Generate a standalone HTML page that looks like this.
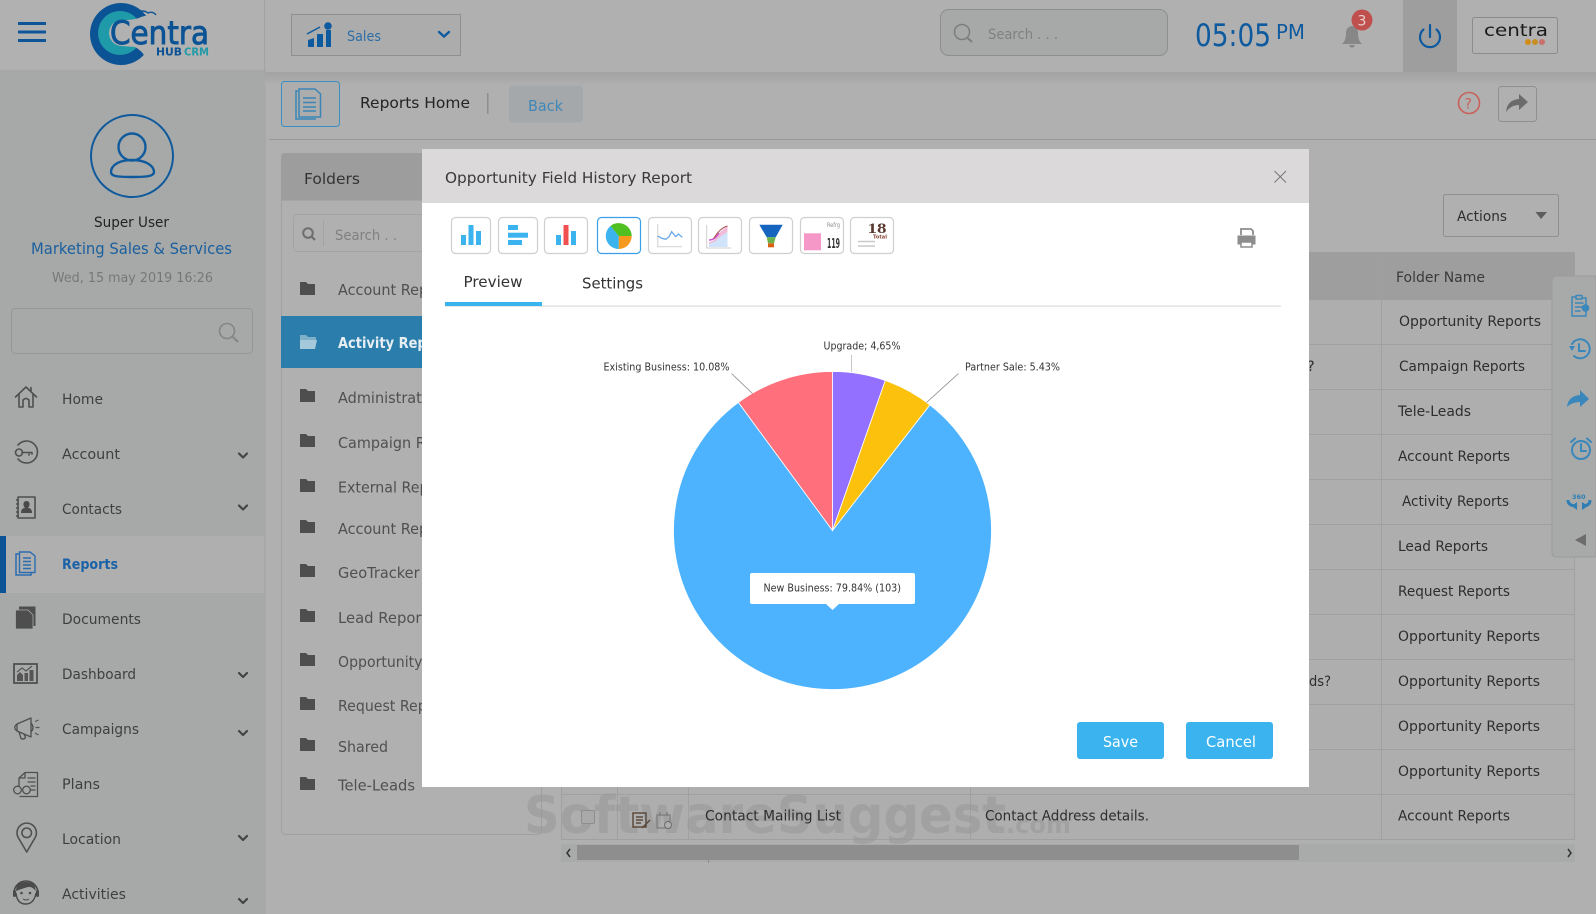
<!DOCTYPE html>
<html lang="en">
<head>
<meta charset="utf-8">
<title>Centra Hub CRM - Reports</title>
<style>
html,body{margin:0;padding:0;background:#b0b0b0;width:1596px;height:914px;overflow:hidden}
svg{display:block;position:absolute;left:0;top:0}
text{font-family:"DejaVu Sans","Liberation Sans",sans-serif;fill:#2e2e2e;font-size:14.5px}
.m{fill:#3f3f3f;font-size:14px}
.f{fill:#505050;font-size:15px}
.t{fill:#2e2e2e;font-size:14.5px}
.l{font-size:10.5px;fill:#333}
.ic{fill:none;stroke:#4f4f4f;stroke-width:1.6;stroke-linejoin:round;stroke-linecap:round}
.chev{fill:none;stroke:#444;stroke-width:2.2;stroke-linecap:round;stroke-linejoin:round}
.cb{fill:#fff;stroke:#cfcfcf;stroke-width:1.2}
.fo{fill:#4e4e4e}
.rl{stroke:#a0a0a0;stroke-width:1}
.ri{fill:none;stroke:#3a88bb;stroke-width:2;stroke-linecap:round;stroke-linejoin:round}
</style>
</head>
<body>
<svg width="1596" height="914" viewBox="0 0 1596 914" xmlns="http://www.w3.org/2000/svg">
<defs>
<linearGradient id="sh" x1="0" y1="0" x2="0" y2="1"><stop offset="0" stop-color="#a3a3a3"/><stop offset="1" stop-color="#b0b0b0"/></linearGradient>
</defs>
<rect width="1596" height="914" fill="#b0b0b0"/>

<!-- sidebar -->
<rect x="0" y="70" width="266" height="844" fill="#a7a9a8"/>
<rect x="0" y="0" width="264" height="70" fill="#b1b1b1"/>
<rect x="264" y="0" width="1" height="72" fill="#a2a2a2"/>
<g fill="#0d5596"><rect x="18" y="22" width="28" height="3"/><rect x="18" y="30.5" width="28" height="3"/><rect x="18" y="39" width="28" height="3"/></g>

<!-- logo -->
<circle cx="121" cy="34" r="31" fill="#0b5394"/>
<circle cx="120" cy="33" r="22" fill="#1f9aa8"/>
<circle cx="122" cy="33" r="13" fill="#b1b1b1"/>
<path d="M124 20 Q136 20 141 17 Q146 15 152 16 L214 15 L214 60 L146 60 Q144 52 135 47 L122 46 Z" fill="#b1b1b1"/>
<path d="M136 13 Q143 9 148 13 Q153 11 156 15" fill="none" stroke="#0b5394" stroke-width="1.4"/>
<text x="110" y="44" style="font-size:32px;fill:#0b5394;stroke:#0b5394;stroke-width:.9" textLength="99" lengthAdjust="spacingAndGlyphs">Centra</text>
<text x="156" y="55.500" style="font-size:10.5px;font-weight:bold;fill:#0b5394" textLength="26" lengthAdjust="spacingAndGlyphs">HUB</text>
<text x="184" y="55.500" style="font-size:10.5px;font-weight:bold;fill:#1f9aa8" textLength="25" lengthAdjust="spacingAndGlyphs">CRM</text>

<!-- user -->
<circle cx="132" cy="156" r="41" fill="none" stroke="#0f5a9d" stroke-width="2"/>
<circle cx="132" cy="147" r="13.5" fill="none" stroke="#0f5a9d" stroke-width="2.4"/>
<path d="M132 160 C118 160 111 166 111 172 C111 176 116 177 132 177 C148 177 154 176 154 172 C154 166 146 160 132 160 Z" fill="none" stroke="#0f5a9d" stroke-width="2.4"/>
<text x="94" y="227" style="font-size:14px;fill:#222" textLength="75" lengthAdjust="spacingAndGlyphs">Super User</text>
<text x="31" y="254" style="font-size:16px;fill:#1a5f9e" textLength="201" lengthAdjust="spacingAndGlyphs">Marketing Sales &amp; Services</text>
<text x="52" y="282" style="font-size:13.5px;fill:#777" textLength="161" lengthAdjust="spacingAndGlyphs">Wed, 15 may 2019 16:26</text>
<rect x="11.5" y="308.5" width="241" height="45" rx="4" fill="#a7a9a8" stroke="#959595"/>
<circle cx="227" cy="331" r="7.5" fill="none" stroke="#858585" stroke-width="1.6"/><path d="M232.500 336.500 L238 342" stroke="#858585" stroke-width="2"/>

<!-- menu -->
<rect x="0" y="536" width="264" height="57" fill="#afafaf"/>
<rect x="0" y="536" width="6" height="57" fill="#0b5394"/>
<text class="m" x="62" y="404" textLength="41" lengthAdjust="spacingAndGlyphs">Home</text>
<text class="m" x="62" y="459" textLength="58" lengthAdjust="spacingAndGlyphs">Account</text>
<text class="m" x="62" y="514" textLength="60" lengthAdjust="spacingAndGlyphs">Contacts</text>
<text x="62" y="569" style="font-size:14px;font-weight:bold;fill:#1a62a8" textLength="56" lengthAdjust="spacingAndGlyphs">Reports</text>
<text class="m" x="62" y="624" textLength="79" lengthAdjust="spacingAndGlyphs">Documents</text>
<text class="m" x="62" y="679" textLength="74" lengthAdjust="spacingAndGlyphs">Dashboard</text>
<text class="m" x="62" y="734" textLength="77" lengthAdjust="spacingAndGlyphs">Campaigns</text>
<text class="m" x="62" y="789" textLength="38" lengthAdjust="spacingAndGlyphs">Plans</text>
<text class="m" x="62" y="844" textLength="59" lengthAdjust="spacingAndGlyphs">Location</text>
<text class="m" x="62" y="899" textLength="64" lengthAdjust="spacingAndGlyphs">Activities</text>
<path class="chev" d="M239 453.500 L243 457.500 L247 453.500"/>
<path class="chev" d="M239 505.500 L243 509.500 L247 505.500"/>
<path class="chev" d="M239 673 L243 677 L247 673"/>
<path class="chev" d="M239 731 L243 735 L247 731"/>
<path class="chev" d="M239 836 L243 840 L247 836"/>
<path class="chev" d="M239 899 L243 903 L247 899"/>
<!-- menu icons -->
<path class="ic" d="M15.500 397 L26 387 L36.500 397 M19 394 V407 H23 V400 Q26 397 29 400 V407 H33 V394 M31 391 V387.500"/>
<path class="ic" d="M18 445 A11 11 0 1 1 18 459 M22 452.500 H32 V454 M29 454 V455"/>
<circle cx="19" cy="452.500" r="3.500" class="ic"/>
<rect x="18" y="497" width="17" height="21" class="ic"/>
<path d="M16 500 h3 M16 504 h3 M16 508 h3 M16 512 h3 M16 516 h3" stroke="#4f4f4f" stroke-width="1.4"/>
<path d="M21 513 Q21 508 25 508 Q23 506 23.500 503.500 Q24 501 26.500 501 Q29 501 29.500 503.500 Q30 506 28 508 Q32 508 32 513 Z" fill="#4a4a4a"/>
<path d="M19.300 554 H16 V575 H31 V572.800" fill="none" stroke="#2a6db0" stroke-width="1.5"/>
<path d="M19.500 552 H30 L35 556 V572.500 H19.500 Z M23 558 H31 M23 561.500 H31 M23 565 H31 M23 568.500 H31" fill="none" stroke="#2a6db0" stroke-width="1.4"/>
<path d="M19 606.500 H35.500 V626 H19 Z" fill="#4e4e4e"/>
<path d="M15.500 610 H28 L33 615 V629 H15.500 Z" fill="#4e4e4e" stroke="#a7a9a8" stroke-width=".8"/>
<rect x="14" y="664" width="23" height="19" fill="none" stroke="#505050" stroke-width="1.8"/>
<path d="M17 681 V675 L20 672 L23 675 V681 Z M24.500 681 V673 H28 V681 Z M29.500 681 V670 H33.500 V681 Z" fill="#555"/>
<path d="M17 672 L22 668 L26 671 L32 666" fill="none" stroke="#555" stroke-width="1.2"/>
<path class="ic" d="M17 724 L31 718 V737 L17 731 Z M17 724 Q12.500 727.500 17 731 M19 732 L21 738.500 Q24 740 25.500 737.500 L24 734 M31 723 Q35 727.500 31 732" style="stroke-width:1.3"/>
<path d="M35 721.500 L38.500 720 M35.500 727.500 H39.500 M35 733 L38.500 735" stroke="#555" stroke-width="1.2"/>
<path class="ic" d="M19 786 V778 L25 772.500 H37.500 V796.500 H20 M25 772.500 V778 H19 M28 778 H35 M28 782 H35 M31 786 H35 M31 790 H35" style="stroke-width:1.3"/>
<circle cx="17.500" cy="790" r="3.800" class="ic" style="stroke-width:1.3"/><circle cx="26.500" cy="790" r="3.800" class="ic" style="stroke-width:1.3"/>
<path class="ic" d="M26.700 852 L18.500 838 A9.700 9.700 0 1 1 34.900 838 Z"/>
<circle cx="26.700" cy="832.800" r="4.800" class="ic"/>
<path d="M14 893 A12 12 0 0 1 38 893" fill="none" stroke="#4a4a4a" stroke-width="1.6"/>
<path d="M16 893 Q17 904 25.700 904 Q34 904 36 893" fill="none" stroke="#4a4a4a" stroke-width="1.4"/>
<rect x="13" y="890" width="3" height="7" rx="1.500" fill="#4a4a4a"/><rect x="36" y="890" width="3" height="7" rx="1.500" fill="#4a4a4a"/>
<path d="M16 891 Q16 882 25.700 882 Q36 882 35.500 891 Q32 886 28 887 Q21 889 16 891 Z" fill="#4a4a4a"/>
<circle cx="21.500" cy="893" r="1.300" fill="#4a4a4a"/><circle cx="30" cy="893" r="1.300" fill="#4a4a4a"/>
<path d="M23 899 Q26 901 29 899" fill="none" stroke="#4a4a4a"/>

<!-- header bar -->
<rect x="265" y="72" width="1331" height="14" fill="url(#sh)"/>
<rect x="291.500" y="14.500" width="169" height="41" fill="#acacac" stroke="#8f8f8f"/>
<path d="M308 40 V47 H314 V38 Z M317 34 V47 H323 V34 Z M326 30 V47 H331 V30 Z" fill="#0e5a9e"/>
<path d="M307 34 L320 27" stroke="#0e5a9e" stroke-width="1.5" fill="none"/>
<circle cx="328" cy="26" r="3.800" fill="#0e5a9e"/>
<text x="347" y="41" style="font-size:14px;fill:#2d6ea8" textLength="34" lengthAdjust="spacingAndGlyphs">Sales</text>
<path d="M439 32 L444 36.500 L449 32" fill="none" stroke="#0e5a9e" stroke-width="2.400" stroke-linecap="round"/>

<rect x="940.500" y="9.500" width="227" height="46" rx="8" fill="#a7a9a8" stroke="#8e8e8e"/>
<circle cx="962" cy="32" r="7.500" fill="none" stroke="#7d7d7d" stroke-width="1.500"/><path d="M967.500 38 L972 42" stroke="#7d7d7d" stroke-width="2"/>
<text x="988" y="39" style="font-size:14px;fill:#808080" textLength="70" lengthAdjust="spacingAndGlyphs">Search . . .</text>
<text x="1195" y="46" style="font-size:31px;fill:#0e5a9e" textLength="76" lengthAdjust="spacingAndGlyphs">05:05</text>
<text x="1276" y="39" style="font-size:20px;fill:#0e5a9e" textLength="29" lengthAdjust="spacingAndGlyphs">PM</text>
<path d="M1342 44 Q1346 41 1346 33 Q1346 27 1352 26 Q1358 27 1358 33 Q1358 41 1362 44 Z" fill="#878787"/>
<path d="M1349 45 H1355 L1353.500 47.500 H1350.500 Z" fill="#878787"/>
<circle cx="1362" cy="20" r="10.500" fill="#c0504d"/>
<text x="1357.500" y="25.500" style="font-size:14px;fill:#e6d0d0">3</text>
<rect x="1403" y="0" width="54" height="72" fill="#9e9e9e"/>
<path d="M1423.500 29.500 A10 10 0 1 0 1436.500 29.500 M1430 25 V37" fill="none" stroke="#0e5a9e" stroke-width="2.200" stroke-linecap="round"/>
<rect x="1472.500" y="17.500" width="85" height="36" rx="2" fill="#b2b2b2" stroke="#8c8c8c"/>
<text x="1484" y="36" style="font-size:17px;fill:#1a1a1a" textLength="64" lengthAdjust="spacingAndGlyphs">centra</text>
<circle cx="1528" cy="42" r="3" fill="#d28d19"/><circle cx="1535" cy="42" r="3" fill="#c78e24"/><circle cx="1542" cy="42" r="3" fill="#c7706c"/>

<!-- subheader -->
<rect x="281.500" y="81.500" width="58" height="45" rx="3" fill="#adadad" stroke="#3b8ec0"/>
<path d="M298 91 H296 V119 H316" fill="none" stroke="#3a86b6" stroke-width="1.500"/>
<path d="M299 89 H315 L320.500 94 V117 H299 Z M303 98 H316 M303 102.500 H316 M303 107 H316 M303 111 H316" fill="none" stroke="#3a86b6" stroke-width="1.500"/>
<text x="360" y="108" style="font-size:15px;fill:#242424" textLength="110" lengthAdjust="spacingAndGlyphs">Reports Home</text>
<rect x="487" y="93" width="1.500" height="21" fill="#8e8e8e"/>
<rect x="509" y="85.500" width="74" height="37" rx="4" fill="#a4a8aa"/>
<text x="528" y="111" style="font-size:15px;fill:#3f87b8" textLength="35" lengthAdjust="spacingAndGlyphs">Back</text>
<circle cx="1469" cy="103" r="10.500" fill="none" stroke="#c9605a" stroke-width="1.600"/>
<text x="1464.500" y="108.500" style="font-size:14px;fill:#c9605a">?</text>
<rect x="1498.500" y="86.500" width="38" height="35" rx="3" fill="#b0b0b0" stroke="#8f8f8f"/>
<path d="M1506 112 Q1507 100 1519 99 V94 L1528 102 L1519 110 V105 Q1511 105 1506 112 Z" fill="#6b6b6b"/>
<rect x="269" y="139" width="1327" height="1" fill="#989898"/>

<!-- folders panel -->
<rect x="281.500" y="153.500" width="260" height="681" rx="4" fill="#b0b0b0" stroke="#a0a0a0"/>
<path d="M281 200.500 V157 Q281 153 285 153 H430 V200.500 Z" fill="#9d9d9d"/>
<text x="304" y="184" style="font-size:15.500px;fill:#343434" textLength="56" lengthAdjust="spacingAndGlyphs">Folders</text>
<rect x="293.500" y="214.500" width="140" height="37" rx="4" fill="#b0b0b0" stroke="#a3a3a3"/>
<rect x="323" y="220" width="1" height="26" fill="#a3a3a3"/>
<circle cx="308" cy="233" r="4.800" fill="none" stroke="#6e6e6e" stroke-width="2"/><path d="M311.500 236.500 L315 240" stroke="#6e6e6e" stroke-width="2.200"/>
<text x="335" y="240" style="font-size:14px;fill:#808080" textLength="62" lengthAdjust="spacingAndGlyphs">Search . .</text>

<rect x="281" y="316" width="160" height="52" fill="#2b7eab"/>
<path d="M300 282 H306 L308 284 H315 V295 H300 Z" class="fo"/>
<path d="M300 335 H306 L308 337 H316 V341 L300 341 Z" fill="#7fb0ca"/><path d="M300 340 H317 L315 349 H300 Z" fill="#a6c8db"/>
<path d="M300 389 H306 L308 391 H315 V402 H300 Z" class="fo"/>
<path d="M300 434 H306 L308 436 H315 V447 H300 Z" class="fo"/>
<path d="M300 479 H306 L308 481 H315 V492 H300 Z" class="fo"/>
<path d="M300 520 H306 L308 522 H315 V533 H300 Z" class="fo"/>
<path d="M300 564 H306 L308 566 H315 V577 H300 Z" class="fo"/>
<path d="M300 609 H306 L308 611 H315 V622 H300 Z" class="fo"/>
<path d="M300 653 H306 L308 655 H315 V666 H300 Z" class="fo"/>
<path d="M300 697 H306 L308 699 H315 V710 H300 Z" class="fo"/>
<path d="M300 738 H306 L308 740 H315 V751 H300 Z" class="fo"/>
<path d="M300 777 H306 L308 779 H315 V790 H300 Z" class="fo"/>
<text class="f" x="338" y="295" textLength="118" lengthAdjust="spacingAndGlyphs">Account Reports</text>
<text x="338" y="348" style="font-size:15px;font-weight:bold;fill:#e6eef3" textLength="118" lengthAdjust="spacingAndGlyphs">Activity Reports</text>
<text class="f" x="338" y="403" textLength="166" lengthAdjust="spacingAndGlyphs">Administration Reports</text>
<text class="f" x="338" y="448" textLength="133" lengthAdjust="spacingAndGlyphs">Campaign Reports</text>
<text class="f" x="338" y="492.500" textLength="118" lengthAdjust="spacingAndGlyphs">External Reports</text>
<text class="f" x="338" y="534" textLength="118" lengthAdjust="spacingAndGlyphs">Account Reports</text>
<text class="f" x="338" y="578" textLength="142" lengthAdjust="spacingAndGlyphs">GeoTracker Reports</text>
<text class="f" x="338" y="623" textLength="97" lengthAdjust="spacingAndGlyphs">Lead Reports</text>
<text class="f" x="338" y="667" textLength="143" lengthAdjust="spacingAndGlyphs">Opportunity Reports</text>
<text class="f" x="338" y="711" textLength="116" lengthAdjust="spacingAndGlyphs">Request Reports</text>
<text class="f" x="338" y="752" textLength="50" lengthAdjust="spacingAndGlyphs">Shared</text>
<text class="f" x="338" y="790.500" textLength="77" lengthAdjust="spacingAndGlyphs">Tele-Leads</text>

<!-- table -->
<rect x="1443.500" y="194.500" width="115" height="42" rx="2" fill="#b0b0b0" stroke="#8f8f8f"/>
<text x="1457" y="221" style="font-size:14.500px;fill:#2e2e2e" textLength="50" lengthAdjust="spacingAndGlyphs">Actions</text>
<path d="M1535.500 212 H1547 L1541 219 Z" fill="#5c5c5c"/>
<rect x="561" y="252" width="1014" height="48" fill="#9e9e9e"/>
<rect x="561" y="300" width="1014" height="540" fill="#aeaeae"/>
<text x="1396" y="282" style="font-size:14.500px;fill:#3a3a3a" textLength="89" lengthAdjust="spacingAndGlyphs">Folder Name</text>
<path class="rl" d="M561 344.500 H1575 M561 389.500 H1575 M561 434.500 H1575 M561 479.500 H1575 M561 524.500 H1575 M561 569.500 H1575 M561 614.500 H1575 M561 659.500 H1575 M561 704.500 H1575 M561 749.500 H1575 M561 794.500 H1575 M561 839.500 H1575 M561.500 300 V840 M617.500 300 V840 M688.500 300 V840 M970.500 300 V840 M1381.500 252 V840 M1574.500 300 V840" fill="none"/>
<!-- watermark -->
<text x="524" y="833" style="font-size:52px;font-weight:bold;fill:#999;opacity:.6" textLength="482" lengthAdjust="spacingAndGlyphs">SoftwareSuggest</text>
<text x="1006" y="833" style="font-size:25px;font-weight:bold;fill:#999;opacity:.6" textLength="65" lengthAdjust="spacingAndGlyphs">.com</text>
<text class="t" x="1399" y="326" textLength="142" lengthAdjust="spacingAndGlyphs">Opportunity Reports</text>
<text class="t" x="1399" y="371" textLength="126" lengthAdjust="spacingAndGlyphs">Campaign Reports</text>
<text class="t" x="1398" y="416" textLength="73" lengthAdjust="spacingAndGlyphs">Tele-Leads</text>
<text class="t" x="1398" y="461" textLength="112" lengthAdjust="spacingAndGlyphs">Account Reports</text>
<text class="t" x="1402" y="506" textLength="107" lengthAdjust="spacingAndGlyphs">Activity Reports</text>
<text class="t" x="1398" y="551" textLength="90" lengthAdjust="spacingAndGlyphs">Lead Reports</text>
<text class="t" x="1398" y="596" textLength="112" lengthAdjust="spacingAndGlyphs">Request Reports</text>
<text class="t" x="1398" y="641" textLength="142" lengthAdjust="spacingAndGlyphs">Opportunity Reports</text>
<text class="t" x="1398" y="686" textLength="142" lengthAdjust="spacingAndGlyphs">Opportunity Reports</text>
<text class="t" x="1398" y="731" textLength="142" lengthAdjust="spacingAndGlyphs">Opportunity Reports</text>
<text class="t" x="1398" y="776" textLength="142" lengthAdjust="spacingAndGlyphs">Opportunity Reports</text>
<text class="t" x="1398" y="820.500" textLength="112" lengthAdjust="spacingAndGlyphs">Account Reports</text>
<text class="t" x="1307" y="371">?</text>
<text class="t" x="1309" y="686" textLength="22" lengthAdjust="spacingAndGlyphs">ds?</text>
<text class="t" x="705" y="820.500" textLength="136" lengthAdjust="spacingAndGlyphs">Contact Mailing List</text>
<text class="t" x="985" y="820.500" textLength="164" lengthAdjust="spacingAndGlyphs">Contact Address details.</text>
<rect x="581.500" y="810.500" width="13" height="13" rx="1.500" fill="#a9a9a9" stroke="#8d8d8d"/>
<path d="M633 813 H646 V827 H633 Z M636 817 H643 M636 820 H643 M636 823 H641 M642 828 L650 820" fill="none" stroke="#5b4a3d" stroke-width="1.500"/>
<path d="M657 815 H670 V828 H657 Z M660 812 V816 M667 812 V816" fill="none" stroke="#7d7d7d" stroke-width="1.300"/>
<circle cx="668" cy="825" r="3.500" fill="#aeaeae" stroke="#6e6e6e"/>
<!-- scrollbar -->
<rect x="561" y="844" width="1014" height="18" fill="#a9abaa"/>
<rect x="577" y="845" width="722" height="15" fill="#8e8e8e"/>
<path d="M570 849 L567 853 L570 857" fill="none" stroke="#333" stroke-width="1.500"/>
<path d="M1568 849 L1571 853 L1568 857" fill="none" stroke="#333" stroke-width="1.500"/>
<rect x="708" y="860" width="1" height="3" fill="#8c8c8c"/>

<!-- right panel -->
<path d="M1596 276 H1557 Q1552 276 1552 281 V552 Q1552 557 1557 557 H1596 Z" fill="#a8a9a9" stroke="#9c9c9c"/>
<path class="ri" style="stroke-width:1.500" d="M1576 297 H1572 V316 H1586 V298 H1582 M1576 295.500 H1582 V299 H1576 Z M1575.500 303 H1583 M1575.500 307 H1583 M1575.500 311 H1580"/>
<circle cx="1585.500" cy="308" r="3.800" fill="#3a88bb"/>
<path class="ri" d="M1572 344 A9.500 9.500 0 1 1 1574 356 M1579 344 V351 H1585"/>
<path d="M1569 346 H1575 L1572 351 Z" fill="#3a88bb"/>
<path d="M1567 407 Q1568 396 1580 395 V390 L1589 399 L1580 407 V402 Q1572 402 1567 407 Z" fill="#3a88bb"/>
<circle cx="1581" cy="450" r="9" class="ri"/><path class="ri" d="M1581 444 V451 H1586 M1571 442 L1575 438.500 M1591 442 L1587 438.500"/>
<text x="1572" y="499" style="font-size:6.500px;font-weight:bold;fill:#2f7fb5">360</text>
<path d="M1568 500 Q1568 506 1577 506 M1590 500 Q1590 506 1582 506" fill="none" stroke="#2f7fb5" stroke-width="3"/>
<path d="M1577 502 V510 L1572 506 Z M1582 502 V510 L1588 506 Z" fill="#2f7fb5"/>
<path d="M1586 534 V546 L1575 540 Z" fill="#6d6d6d"/>

<!-- modal -->
<rect x="422" y="149" width="887" height="638" fill="#fff"/>
<rect x="422" y="149" width="887" height="54" fill="#dbd9da"/>
<text x="445" y="183" style="font-size:15.500px;fill:#3a3a3a" textLength="247" lengthAdjust="spacingAndGlyphs">Opportunity Field History Report</text>
<path d="M1274.500 171 L1286 182.500 M1286 171 L1274.500 182.500" stroke="#777" stroke-width="1" fill="none"/>

<rect class="cb" x="451.500" y="217.500" width="39" height="36" rx="4"/>
<rect class="cb" x="498.500" y="217.500" width="39" height="36" rx="4"/>
<rect class="cb" x="544.500" y="217.500" width="43" height="36" rx="4"/>
<rect class="cb" style="stroke:#3a9fe8" x="597.500" y="217.500" width="43" height="36" rx="4"/>
<rect class="cb" x="648.500" y="217.500" width="43" height="36" rx="4"/>
<rect class="cb" x="698.500" y="217.500" width="43" height="36" rx="4"/>
<rect class="cb" x="749.500" y="217.500" width="43" height="36" rx="4"/>
<rect class="cb" x="800.500" y="217.500" width="43" height="36" rx="4"/>
<rect class="cb" x="850.500" y="217.500" width="43" height="36" rx="4"/>
<g fill="#3ab3ee">
<rect x="461" y="235" width="5" height="10"/><rect x="468.500" y="225" width="5" height="20"/><rect x="476" y="231" width="5" height="14"/>
<rect x="508" y="225" width="10" height="5"/><rect x="508" y="232.700" width="20" height="5"/><rect x="508" y="240" width="14" height="5"/>
<rect x="556" y="235" width="5" height="10"/><rect x="571" y="231" width="5" height="14"/>
</g>
<rect x="563.500" y="225" width="5" height="20" fill="#f0504f"/>
<path d="M618.700 236 L610.500 226 A13 13 0 0 1 631.700 236 Z" fill="#4fc020"/>
<path d="M618.700 236 H631.700 A13 13 0 0 1 618.700 249 Z" fill="#f59a1e"/>
<path d="M618.700 236 V249 A13 13 0 0 1 610.500 226 Z" fill="#3ab3ee"/>
<path d="M657.700 224 V246.700 H682" fill="none" stroke="#d8d8d8" stroke-width="1.200"/>
<polyline points="657.700,236 661.700,238.300 665.700,239.300 669,236.700 671.700,231.700 675.700,236.700 678.300,234 682.300,237.300" fill="none" stroke="#6aa9e8" stroke-width="1.300"/>
<path d="M706.700 225 V248 H731" fill="none" stroke="#cfcfcf" stroke-width="1"/>
<path d="M709 247 V243 Q716 242 720 236 L727.500 229 V247 Z" fill="#cfe3fa"/>
<path d="M709 242 Q716 241 720 232 L727.500 226 V232 Q720 236 716 241 L709 244 Z" fill="#f2bcd9"/>
<path d="M709 240 Q715 240 719 233" stroke="#cc55cc" stroke-width="1.500" fill="none"/>
<path d="M714 238 Q720 228 727.500 226" stroke="#a85050" stroke-width="1" fill="none"/>
<path d="M759.300 224.700 H782.700 L775.700 237.300 H766.700 Z" fill="#1565c0"/>
<path d="M766.700 237.300 H775.700 L774 243.300 H768 Z" fill="#6ab24a"/>
<rect x="768" y="243.300" width="6" height="4" fill="#d9600f"/>
<rect x="804" y="233.300" width="17" height="17" fill="#f598c8"/>
<text x="827" y="227" style="font-size:6.500px;fill:#8a8a8a" textLength="13" lengthAdjust="spacingAndGlyphs">Refrg</text>
<text x="827" y="248" style="font-size:13px;font-weight:bold;fill:#333" textLength="13" lengthAdjust="spacingAndGlyphs">119</text>
<text x="867.500" y="233" style="font-size:15px;font-weight:bold;font-family:'Liberation Serif',serif;fill:#5a3a30" textLength="19" lengthAdjust="spacingAndGlyphs">18</text>
<text x="873" y="238.500" style="font-size:5px;font-weight:bold;fill:#8a4a3a" textLength="14" lengthAdjust="spacingAndGlyphs">Total</text>
<path d="M858 241.500 H875 M858 246 H875" stroke="#c9c9c9" stroke-width="1.500"/>

<text x="463.500" y="287" style="font-size:15px;fill:#333" textLength="59" lengthAdjust="spacingAndGlyphs">Preview</text>
<text x="582" y="288.500" style="font-size:15px;fill:#333" textLength="61" lengthAdjust="spacingAndGlyphs">Settings</text>
<rect x="445" y="305.500" width="836" height="1.200" fill="#dcdcdc"/>
<rect x="445" y="302" width="97" height="4" fill="#3ab3ee"/>
<path d="M1241 235 V229 H1251 L1253 231 V235" fill="#fff" stroke="#8d8d8d" stroke-width="1.800"/>
<path d="M1238 236 H1255 V244 H1252 V241 H1241 V244 H1238 Z" fill="#8d8d8d" stroke="#8d8d8d" stroke-width="1"/>
<path d="M1241 242 H1252 V247 H1241 Z" fill="#fff" stroke="#8d8d8d" stroke-width="1.500"/>

<!-- pie -->
<path d="M832.500 530.500 L738.400 402.400 A159 159 0 1 0 929.900 404.900 Z" fill="#4db3ff" stroke="#fff" stroke-width=".8"/>
<path d="M832.500 530.500 L738.400 402.400 A159 159 0 0 1 832.500 371.500 Z" fill="#ff6f7c" stroke="#fff" stroke-width=".8"/>
<path d="M832.500 530.500 V371.500 A159 159 0 0 1 885.300 380.500 Z" fill="#9370ff" stroke="#fff" stroke-width=".8"/>
<path d="M832.500 530.500 L885.300 380.500 A159 159 0 0 1 929.900 404.900 Z" fill="#fbc10c" stroke="#fff" stroke-width=".8"/>
<path d="M851.500 355 V372" stroke="#c8c8c8" fill="none"/>
<path d="M731.500 373.500 L752.500 393.500" stroke="#888" fill="none" stroke-width=".8"/>
<path d="M958.500 373.500 L926.500 402.500" stroke="#888" fill="none" stroke-width=".8"/>
<text class="l" x="823.500" y="349.500" textLength="77" lengthAdjust="spacingAndGlyphs">Upgrade; 4,65%</text>
<text class="l" x="603.500" y="370.500" textLength="126" lengthAdjust="spacingAndGlyphs">Existing Business: 10.08%</text>
<text class="l" x="965" y="370.500" textLength="95" lengthAdjust="spacingAndGlyphs">Partner Sale: 5.43%</text>
<rect x="750" y="573" width="165" height="31" rx="2" fill="#fff"/>
<path d="M826 604 H839 L832.500 610 Z" fill="#fff"/>
<text class="l" x="763.500" y="591.500" textLength="137.500" lengthAdjust="spacingAndGlyphs">New Business: 79.84% (103)</text>

<!-- buttons -->
<rect x="1077" y="722" width="87" height="37" rx="3" fill="#3ab3ee"/>
<rect x="1186" y="722" width="87" height="37" rx="3" fill="#3ab3ee"/>
<text x="1103" y="747" style="font-size:15.500px;fill:#fff" textLength="35" lengthAdjust="spacingAndGlyphs">Save</text>
<text x="1206" y="747" style="font-size:15.500px;fill:#fff" textLength="50" lengthAdjust="spacingAndGlyphs">Cancel</text>
</svg>
</body>
</html>
